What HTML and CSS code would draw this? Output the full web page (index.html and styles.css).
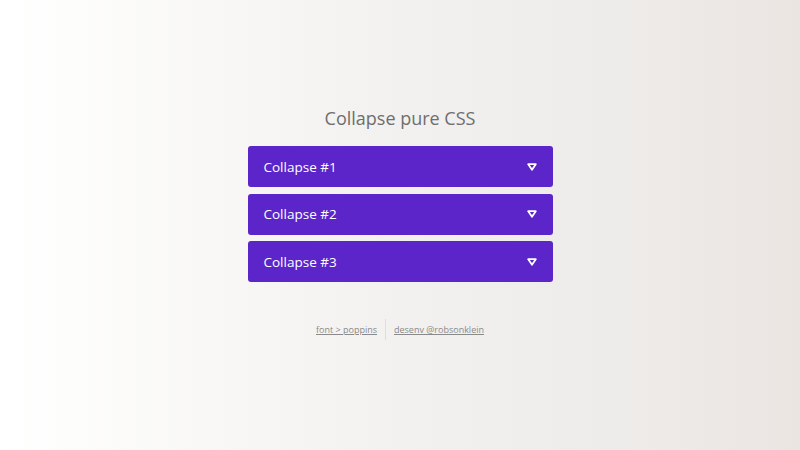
FILE: index.html
```html
<!DOCTYPE html>
<html>
<head>
<meta charset="utf-8">
<link rel="stylesheet" href="styles.css">
</head>
<body>
<main class="wrap">
  <h1 class="title">Collapse pure CSS</h1>
  <div class="list">
    <div class="item"><span>Collapse #1</span><svg class="arrow" viewBox="0 0 10 8" width="10" height="8"><path d="M1.2 1.2 H8.8 L5 6.8 Z" fill="none" stroke="#fff" stroke-width="1.8" stroke-linejoin="round"/></svg></div>
    <div class="item"><span>Collapse #2</span><svg class="arrow" viewBox="0 0 10 8" width="10" height="8"><path d="M1.2 1.2 H8.8 L5 6.8 Z" fill="none" stroke="#fff" stroke-width="1.8" stroke-linejoin="round"/></svg></div>
    <div class="item"><span>Collapse #3</span><svg class="arrow" viewBox="0 0 10 8" width="10" height="8"><path d="M1.2 1.2 H8.8 L5 6.8 Z" fill="none" stroke="#fff" stroke-width="1.8" stroke-linejoin="round"/></svg></div>
  </div>
  <footer class="foot">
    <a href="#">font &gt; poppins</a>
    <span class="sep"></span>
    <a href="#">desenv @robsonklein</a>
  </footer>
</main>
</body>
</html>
```
FILE: styles.css
```css
html, body { margin: 0; height: 100%; }
body {
  background: linear-gradient(to right, #ffffff 0%, #fdfdfc 8%, #f9f8f6 25%, #f2f1ef 50%, #eeecea 75%, #ebe5e2 100%);
  font-family: "Open Sans", "Inter", sans-serif;
}
.wrap {
  width: 305px;
  margin: 0 auto;
  padding-top: 105px;
  display: flex;
  flex-direction: column;
  align-items: stretch;
}
.title {
  margin: 0 0 15px;
  text-align: center;
  font-weight: 400;
  font-size: 18px;
  line-height: 26px;
  color: #6e6e6e;
}
.list { display: flex; flex-direction: column; gap: 6.5px; }
.item {
  height: 41px;
  background: #5b25c9;
  border-radius: 3px;
  display: flex;
  align-items: center;
  justify-content: space-between;
  padding: 0 16px 0 16px;
  color: #fff;
  font-size: 13.5px;
}
.arrow { display: block; }
.foot {
  margin-top: 37px;
  display: flex;
  justify-content: center;
  align-items: center;
  gap: 8px;
  font-size: 9px;
}
.foot a { color: #8a8a8a; text-decoration: underline; }
.sep { width: 1px; height: 21px; background: #e0dedc; }
```
